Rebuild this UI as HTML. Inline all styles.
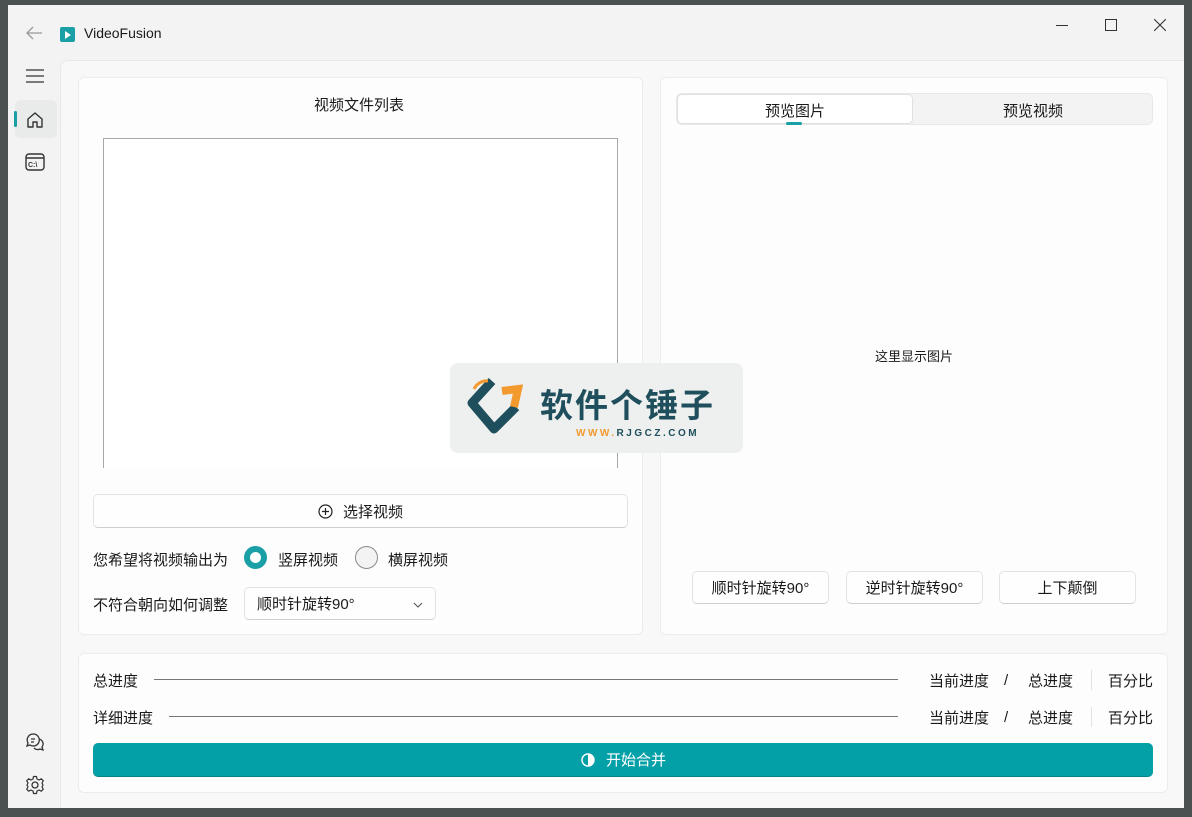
<!DOCTYPE html>
<html><head><meta charset="utf-8"><style>
*{box-sizing:border-box;margin:0;padding:0}
body{width:1192px;height:817px;background:#4b5051;position:relative;overflow:hidden;font-family:"Liberation Sans","Noto Sans CJK SC",sans-serif;color:#1a1a1a;font-size:15px}
.win{position:absolute;left:8px;top:5px;width:1176px;height:803px;background:#f3f3f3}
.abs{position:absolute}
.content{position:absolute;left:52px;top:55px;right:0;bottom:0;background:#f8f8f8;border-top-left-radius:8px;border-top:1px solid #e8e8e8;border-left:1px solid #e8e8e8}
.card{position:absolute;background:#fdfdfd;border:1px solid #ececec;border-radius:6px}
.btn{position:absolute;background:#fefefe;border:1px solid #e3e3e3;border-bottom-color:#cfcfcf;border-radius:5px;display:flex;align-items:center;justify-content:center;font-size:15px}
.t{position:absolute;white-space:nowrap}
</style></head><body>
<div class="win">
 <svg class="abs" style="left:17px;top:20px" width="18" height="16" viewBox="0 0 18 16"><path d="M17 8H2M8 2L2 8l6 6" fill="none" stroke="#999" stroke-width="1.3"/></svg>
 <div class="abs" style="left:52px;top:22px;width:15px;height:15px;background:#1a9fa6;border-radius:2px"></div>
 <svg class="abs" style="left:56px;top:26px" width="8" height="8"><path d="M1 0L7 4L1 8Z" fill="#fff"/></svg>
 <div class="t" style="left:76px;top:20px;font-size:14px">VideoFusion</div>
 <div class="abs" style="left:1048px;top:20px;width:12px;height:1px;background:#333"></div>
 <div class="abs" style="left:1097px;top:14px;width:12px;height:12px;border:1px solid #333"></div>
 <svg class="abs" style="left:1146px;top:14px" width="12" height="12"><path d="M0 0L12 12M12 0L0 12" stroke="#333" stroke-width="1.1"/></svg>
 <svg class="abs" style="left:18px;top:64px" width="18" height="14"><path d="M0 1H18M0 7H18M0 13H18" stroke="#333" stroke-width="1.3"/></svg>
 <div class="abs" style="left:7px;top:95px;width:42px;height:38px;background:#e9eaea;border-radius:5px"></div>
 <div class="abs" style="left:6px;top:106px;width:3px;height:16px;background:#1a9fa6;border-radius:2px"></div>
 <svg class="abs" style="left:18px;top:106px" width="18" height="18" viewBox="0 0 18 18"><path d="M2 8L9 2l7 6v8h-5v-5H7v5H2z" fill="none" stroke="#333" stroke-width="1.4" stroke-linejoin="round"/></svg>
 <svg class="abs" style="left:17px;top:148px" width="20" height="18" viewBox="0 0 20 18"><rect x="1" y="1" width="18" height="16" rx="3" fill="none" stroke="#333" stroke-width="1.4"/><path d="M1 5H19" stroke="#333" stroke-width="1.4"/><text x="3" y="14" font-size="7" font-family="Liberation Sans" font-weight="bold" fill="#333">C:\</text></svg>
 <svg class="abs" style="left:17px;top:727px" width="20" height="20" viewBox="0 0 20 20"><path d="M8 2a6 6 0 0 0-5 9l-1 3 3-1a6 6 0 1 0 3-11z" fill="none" stroke="#333" stroke-width="1.3"/><path d="M14 7a5 5 0 0 1 3 8l1 3-3-1a5 5 0 0 1-6-1" fill="none" stroke="#333" stroke-width="1.3"/><path d="M6 7h4M6 10h3" stroke="#333" stroke-width="1.2"/></svg>
 <svg class="abs" style="left:17px;top:770px" width="20" height="20" viewBox="0 0 20 20"><circle cx="10" cy="10" r="3" fill="none" stroke="#333" stroke-width="1.3"/><path d="M8.5 1.5h3l.5 2.5 2 1 2.3-1.2 2 2L17 8l1 2-1 2 1.3 2.2-2 2L14 15l-2 1-.5 2.5h-3L8 16l-2-1-2.3 1.2-2-2L3 12l-1-2 1-2-1.3-2.2 2-2L6 5l2-1z" fill="none" stroke="#333" stroke-width="1.2" stroke-linejoin="round"/></svg>
 <div class="content"></div>
 <div class="card" style="left:70px;top:72px;width:565px;height:558px"></div>
 <div class="t" style="left:306px;top:89px;font-size:15px">视频文件列表</div>
 <div class="abs" style="left:95px;top:133px;width:515px;height:330px;background:#fff;border:1px solid #a8a8a8;border-bottom:none"></div>
 <div class="btn" style="left:85px;top:489px;width:535px;height:34px"><svg width="15" height="15" style="margin-right:10px"><circle cx="7.5" cy="7.5" r="6.5" fill="none" stroke="#222" stroke-width="1.2"/><path d="M7.5 4v7M4 7.5h7" stroke="#222" stroke-width="1.2"/></svg>选择视频</div>
 <div class="t" style="left:85px;top:544px">您希望将视频输出为</div>
 <div class="abs" style="left:236px;top:541px;width:23px;height:23px;border-radius:50%;border:6px solid #1a9fa6;background:#fff"></div>
 <div class="t" style="left:270px;top:544px">竖屏视频</div>
 <div class="abs" style="left:347px;top:541px;width:23px;height:23px;border-radius:50%;border:1.5px solid #8a8a8a;background:#f3f3f3"></div>
 <div class="t" style="left:380px;top:544px">横屏视频</div>
 <div class="t" style="left:85px;top:589px">不符合朝向如何调整</div>
 <div class="btn" style="left:236px;top:582px;width:192px;height:33px;justify-content:flex-start;padding-left:12px">顺时针旋转90°<svg width="10" height="6" style="position:absolute;right:12px;top:14px"><path d="M1 1l4 4 4-4" fill="none" stroke="#555" stroke-width="1.1"/></svg></div>
 <div class="card" style="left:652px;top:72px;width:508px;height:558px"></div>
 <div class="abs" style="left:668px;top:88px;width:477px;height:32px;background:#f3f3f3;border:1px solid #e8e8e8;border-radius:6px"></div>
 <div class="abs" style="left:669px;top:89px;width:236px;height:30px;background:#fff;border:1px solid #e0e0e0;border-radius:5px"></div>
 <div class="t" style="left:757px;top:95px">预览图片</div>
 <div class="abs" style="left:778px;top:117px;width:16px;height:3px;background:#1a9fa6;border-radius:2px"></div>
 <div class="t" style="left:995px;top:95px">预览视频</div>
 <div class="t" style="left:867px;top:341px;font-size:13px">这里显示图片</div>
 <div class="btn" style="left:684px;top:566px;width:137px;height:33px">顺时针旋转90°</div>
 <div class="btn" style="left:838px;top:566px;width:137px;height:33px">逆时针旋转90°</div>
 <div class="btn" style="left:991px;top:566px;width:137px;height:33px">上下颠倒</div>
 <div class="card" style="left:70px;top:648px;width:1090px;height:140px"></div>
 <div class="t" style="left:85px;top:665px">总进度</div>
 <div class="abs" style="left:146px;top:674px;width:744px;height:1px;background:#777"></div>
 <div class="t" style="left:921px;top:665px">当前进度</div><div class="t" style="left:996px;top:667px">/</div><div class="t" style="left:1020px;top:665px">总进度</div>
 <div class="abs" style="left:1083px;top:665px;width:1px;height:20px;background:#e3e3e3"></div>
 <div class="t" style="left:1100px;top:665px">百分比</div>
 <div class="t" style="left:85px;top:702px">详细进度</div>
 <div class="abs" style="left:161px;top:711px;width:729px;height:1px;background:#777"></div>
 <div class="t" style="left:921px;top:702px">当前进度</div><div class="t" style="left:996px;top:704px">/</div><div class="t" style="left:1020px;top:702px">总进度</div>
 <div class="abs" style="left:1083px;top:702px;width:1px;height:20px;background:#e3e3e3"></div>
 <div class="t" style="left:1100px;top:702px">百分比</div>
 <div class="abs" style="left:85px;top:738px;width:1060px;height:34px;background:#04a0a8;border-radius:5px;border-bottom:1px solid #07848a;display:flex;align-items:center;justify-content:center;color:#fff;font-size:15px"><svg width="16" height="14" style="margin-right:10px"><circle cx="8" cy="7" r="6" fill="none" stroke="#fff" stroke-width="1.4"/><path d="M8 1a6 6 0 0 1 0 12z" fill="#fff"/></svg>开始合并</div>
 <div class="abs" style="left:442px;top:358px;width:293px;height:90px;background:#eeefef;border-radius:8px"></div>
 <svg class="abs" style="left:458px;top:368px" width="80" height="72" viewBox="0 0 80 72"><path d="M26 8L6 30l22 26 22-22" fill="none" stroke="#1f4f5c" stroke-width="9" stroke-linejoin="round"/><path d="M36 18l16 -2 -4 18" fill="none" stroke="#f29a2e" stroke-width="8"/><path d="M8 16a14 14 0 0 1 14-8" fill="none" stroke="#f29a2e" stroke-width="3"/></svg>
 <div class="t" style="left:532px;top:378px;font-size:33px;font-weight:bold;color:#1f4f5c;letter-spacing:2px;font-family:'Noto Sans CJK SC',sans-serif;line-height:40px">软件个锤子</div>
 <div class="t" style="left:568px;top:423px;font-size:10px;font-weight:bold;letter-spacing:2.5px;color:#1f4f5c"><span style="color:#f29a2e">WWW.</span>RJGCZ.COM</div>
</div>
</body></html>
